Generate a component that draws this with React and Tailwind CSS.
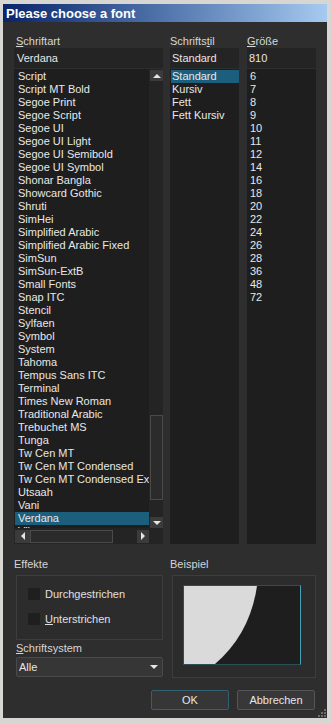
import React from "react";

const fonts = [
  "Script","Script MT Bold","Segoe Print","Segoe Script","Segoe UI","Segoe UI Light","Segoe UI Semibold","Segoe UI Symbol","Shonar Bangla","Showcard Gothic","Shruti","SimHei","Simplified Arabic","Simplified Arabic Fixed","SimSun","SimSun-ExtB","Small Fonts","Snap ITC","Stencil","Sylfaen","Symbol","System","Tahoma","Tempus Sans ITC","Terminal","Times New Roman","Traditional Arabic","Trebuchet MS","Tunga","Tw Cen MT","Tw Cen MT Condensed","Tw Cen MT Condensed Extra Bold","Utsaah","Vani","Verdana","Vijaya",
];
const styles = ["Standard","Kursiv","Fett","Fett Kursiv"];
const sizes = ["6","7","8","9","10","11","12","14","16","18","20","22","24","26","28","36","48","72"];

function Tri({ dir }) {
  const pts = {
    up: "0,5 4,1 8,5",
    down: "0,1 8,1 4,5",
    left: "5,0 5,8 1,4",
    right: "1,0 1,8 5,4",
  }[dir];
  const w = dir === "up" || dir === "down" ? 8 : 6;
  const h = dir === "up" || dir === "down" ? 6 : 8;
  return (
    <svg width={w} height={h} viewBox={`0 0 ${w} ${h}`}>
      <polygon points={pts} fill="#e6e6e6" />
    </svg>
  );
}

export default function App() {
  return (
    <div
      className="w-[331px] h-[724px] bg-[#d8d6d2] pt-[4px] pl-[3px] text-[11px] leading-[13px]"
      style={{ fontFamily: '"Liberation Sans", Arial, sans-serif' }}
    >
      <div className="relative w-[324px] h-[714px] bg-[#2e2e2e] flex flex-col">
        {/* Title bar */}
        <div className="h-[18px] bg-gradient-to-r from-[#0a246a] to-[#a6caf0] text-white font-bold text-[13px] pl-[3px] flex items-center">
          Please choose a font
        </div>

        <div className="flex flex-col pl-[11px] pr-[11px]">
          {/* Top columns */}
          <div className="flex">
            {/* Schriftart */}
            <div className="w-[149px] flex flex-col">
              <div className="h-[26px] pt-[13px] pl-[2px] text-[#d6d6d6]">
                <span className="underline">S</span>chriftart
              </div>
              <div className="h-[20px] bg-[#242424] pl-[3px] text-[#e6e6e6] flex items-center">Verdana</div>
              <div className="mt-[1px] h-[475px] bg-[#1e1e1e] flex flex-col">
                <div className="flex h-[459px]">
                  <div className="flex-1 overflow-hidden pt-[1px] pl-[1px]">
                    {fonts.map((f) => (
                      <div
                        key={f}
                        className={`h-[13px] pl-[3px] whitespace-nowrap text-[#e8e8e8] ${f === "Verdana" ? "bg-[#1c5f7c]" : ""}`}
                      >
                        {f}
                      </div>
                    ))}
                  </div>
                  <div className="w-[14px] bg-[#242424] flex flex-col items-end pt-[1px]">
                    <div className="w-[13px] h-[11px] bg-[#3b3b3b] flex items-center justify-center">
                      <Tri dir="up" />
                    </div>
                    <div className="w-[13px] h-[334px]" />
                    <div className="w-[13px] h-[85px] border border-[#4a4a4a] bg-[#2b2b2b]" />
                    <div className="w-[13px] h-[17px]" />
                    <div className="w-[13px] h-[11px] bg-[#3b3b3b] flex items-center justify-center">
                      <Tri dir="down" />
                    </div>
                  </div>
                </div>
                <div className="h-[16px] flex">
                  <div className="w-[135px] bg-[#242424] flex items-center pl-[1px]">
                    <div className="w-[15px] h-[13px] bg-[#3b3b3b] flex items-center justify-center">
                      <Tri dir="left" />
                    </div>
                    <div className="w-[83px] h-[13px] border border-[#4a4a4a] bg-[#2b2b2b]" />
                    <div className="flex-1" />
                    <div className="w-[12px] h-[13px] bg-[#3b3b3b] flex items-center justify-center">
                      <Tri dir="right" />
                    </div>
                  </div>
                  <div className="w-[14px] bg-[#242424]" />
                </div>
              </div>
            </div>

            {/* Schriftstil */}
            <div className="w-[69px] ml-[7px] flex flex-col">
              <div className="h-[26px] pt-[13px] text-[#d6d6d6]">
                Schrifts<span className="underline">t</span>il
              </div>
              <div className="h-[20px] bg-[#242424] pl-[2px] text-[#e6e6e6] flex items-center">Standard</div>
              <div className="mt-[1px] h-[475px] bg-[#1e1e1e] pt-[1px] pl-[1px]">
                {styles.map((s) => (
                  <div
                    key={s}
                    className={`h-[13px] pl-[1px] whitespace-nowrap text-[#e8e8e8] ${s === "Standard" ? "bg-[#1c5f7c]" : ""}`}
                  >
                    {s}
                  </div>
                ))}
              </div>
            </div>

            {/* Größe */}
            <div className="w-[69px] ml-[8px] flex flex-col">
              <div className="h-[26px] pt-[13px] text-[#d6d6d6]">
                <span className="underline">G</span>röße
              </div>
              <div className="h-[20px] bg-[#242424] pl-[2px] text-[#e6e6e6] flex items-center">810</div>
              <div className="mt-[1px] h-[475px] bg-[#1e1e1e] pt-[1px] pl-[3px]">
                {sizes.map((s) => (
                  <div key={s} className="h-[13px] text-[#e8e8e8]">
                    {s}
                  </div>
                ))}
              </div>
            </div>
          </div>

          {/* Bottom area */}
          <div className="flex mt-[14px]">
            <div className="w-[149px] flex flex-col">
              <div className="h-[13px] text-[#d6d6d6]">Effekte</div>
              <div className="mt-[4px] ml-[2px] w-[147px] h-[65px] border border-[#3d3d3d] bg-[#2c2c2c] pt-[12px] pl-[11px] flex flex-col gap-[13px]">
                <div className="flex items-center h-[12px]">
                  <div className="w-[12px] h-[12px] bg-[#1f1f1f]" />
                  <span className="ml-[5px] text-[#e0e0e0]">
                    Durch<span className="underline">g</span>estrichen
                  </span>
                </div>
                <div className="flex items-center h-[12px]">
                  <div className="w-[12px] h-[12px] bg-[#1f1f1f]" />
                  <span className="ml-[5px] text-[#e0e0e0]">
                    <span className="underline">U</span>nterstrichen
                  </span>
                </div>
              </div>
              <div className="mt-[2px] ml-[2px] h-[13px] text-[#d6d6d6]">
                <span className="underline">S</span>chriftsystem
              </div>
              <div className="mt-[2px] ml-[2px] w-[147px] h-[20px] bg-[#363636] border border-[#4a4a4a] rounded-[2px] flex items-center pl-[2px] pr-[4px] text-[#e6e6e6]">
                <span className="flex-1">Alle</span>
                <Tri dir="down" />
              </div>
            </div>

            <div className="w-[146px] ml-[7px] flex flex-col">
              <div className="h-[13px] text-[#d6d6d6]">Beispiel</div>
              <div className="mt-[4px] ml-[2px] w-[144px] h-[103px] border border-[#3d3d3d] bg-[#2c2c2c] pt-[9px] pl-[10px]">
                <div className="w-[118px] h-[80px] bg-[#1e1e1e] border border-[#2c4f58] border-r-[#4aa0b4]">
                  <svg width="116" height="78" viewBox="0 0 116 78" className="block">
                    <path d="M0,0 L73,0 Q66,48 31,78 L0,78 Z" fill="#dadada" />
                  </svg>
                </div>
              </div>
            </div>
          </div>

          {/* Buttons */}
          <div className="flex justify-end gap-[8px] mt-[12px] pr-[1px]">
            <div className="w-[78px] h-[20px] bg-[#363636] border border-[#2f6172] rounded-[2px] flex items-center justify-center text-[#e6e6e6]">
              OK
            </div>
            <div className="w-[78px] h-[20px] bg-[#383838] border border-[#555555] rounded-[2px] flex items-center justify-center text-[#e6e6e6]">
              Abbrechen
            </div>
          </div>
        </div>

        {/* Resize grip */}
        <svg width="8" height="8" viewBox="0 0 8 8" className="absolute right-[1px] bottom-[1px]">
          <rect x="6" y="0" width="2" height="2" fill="#6a6a6a" />
          <rect x="3" y="3" width="2" height="2" fill="#6a6a6a" />
          <rect x="6" y="3" width="2" height="2" fill="#6a6a6a" />
          <rect x="0" y="6" width="2" height="2" fill="#6a6a6a" />
          <rect x="3" y="6" width="2" height="2" fill="#6a6a6a" />
          <rect x="6" y="6" width="2" height="2" fill="#6a6a6a" />
        </svg>
      </div>
    </div>
  );
}
